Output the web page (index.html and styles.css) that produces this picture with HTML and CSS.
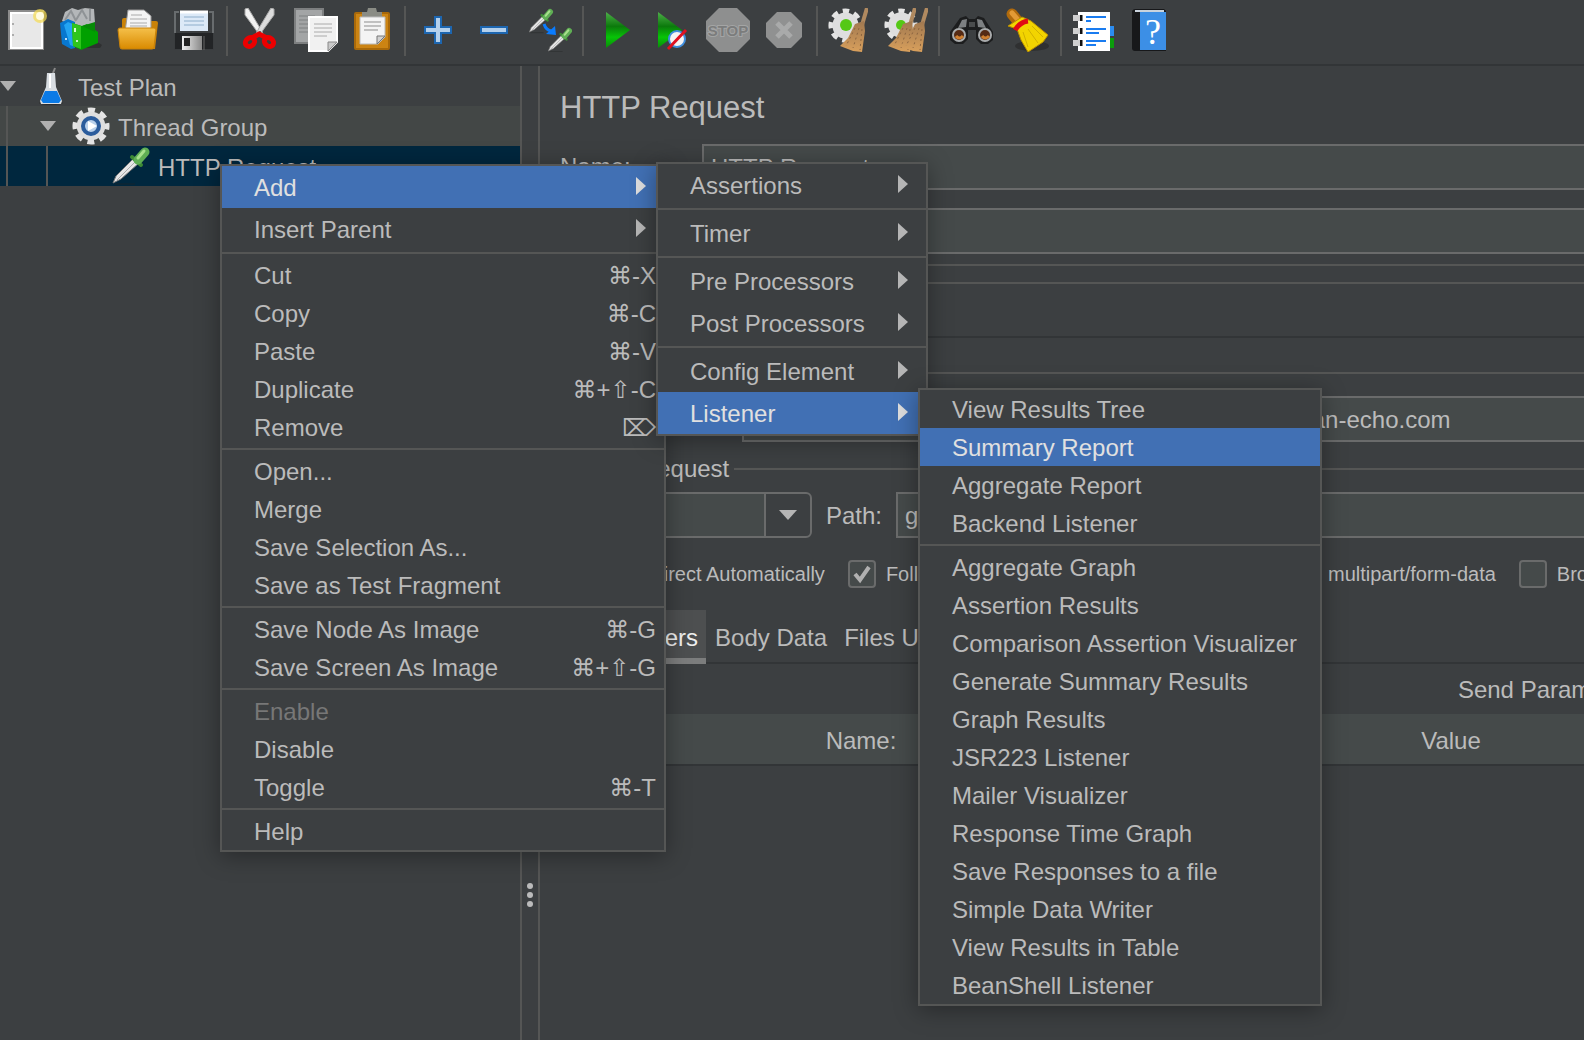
FILE: index.html
```html
<!DOCTYPE html>
<html lang="en">
<head>
    <meta charset="UTF-8">
    <meta name="viewport" content="width=device-width, initial-scale=1.0">
    <title>Apache JMeter</title>
    <link rel="stylesheet" href="styles.css">
</head>

<body>

    <!-- shapes that several icons share -->
    <svg class="shapes" aria-hidden="true">
        <defs>
            <linearGradient id="folder" x1="0" y1="0" x2="0" y2="1"><stop offset="0" stop-color="#f5c04a"/><stop offset="1" stop-color="#d98a00"/></linearGradient>
            <linearGradient id="playfill" x1="0" y1="0" x2="0" y2="1"><stop offset="0" stop-color="#4fae4a"/><stop offset=".4" stop-color="#0b7a0b"/><stop offset=".7" stop-color="#07c407"/><stop offset="1" stop-color="#0a8a0a"/></linearGradient>
            <linearGradient id="straw" x1="0" y1="0" x2="0" y2="1"><stop offset="0" stop-color="#a07850"/><stop offset="1" stop-color="#d9a05c"/></linearGradient>
            <linearGradient id="metal" x1="0" y1="0" x2="1" y2="0"><stop offset="0" stop-color="#eee"/><stop offset="1" stop-color="#888"/></linearGradient>
            <symbol id="gear" viewBox="0 0 40 40">
                <circle cx="20" cy="20" r="16" fill="none" stroke="#e4e4e4" stroke-width="7" stroke-dasharray="7 5.566" stroke-dashoffset="3.5"/>
                <circle cx="20" cy="20" r="15" fill="#dedede"/>
            </symbol>
            <symbol id="dropper" viewBox="0 0 40 40">
                <path d="M4 38h20" stroke="#222" stroke-width="1" opacity=".6"/>
                <path d="M2 37l3-7L23 12l5 5L10 33z" fill="#e6e6e6" stroke="#777" stroke-width="1"/>
                <path d="M6 34L24 16" stroke="#aaa" stroke-width="1"/>
                <path d="M21 11l9 8" stroke="#3d8a35" stroke-width="4" stroke-linecap="round"/>
                <path d="M27 14l7-8" stroke="#5fae54" stroke-width="9" stroke-linecap="round"/>
                <path d="M27 12l6-7" stroke="#a8e08d" stroke-width="3" stroke-linecap="round"/>
            </symbol>
            <symbol id="broom" viewBox="0 0 28 44">
                <path d="M27 0l-5 17" stroke="#b08a60" stroke-width="4"/>
                <path d="M15 16l9-3 1 10-3 21-9-1-13-5 8-8z" fill="url(#straw)"/>
                <path d="M15 20L6 38M19 20l-6 20M22 21l-2 21" stroke="#8a6440" stroke-width="1" stroke-dasharray="2 3"/>
            </symbol>
        </defs>
    </svg>

    <header class="toolbar">
        <button aria-label="New"><svg viewBox="0 0 44 44">
            <rect x="5" y="3" width="34" height="38" fill="#e8e8e8" stroke="#8c8c8c" stroke-width="2"/>
            <path d="M7 40V5h31v35z" fill="none" stroke="#fff" stroke-width="2"/>
            <circle cx="9" cy="16" r="1" fill="#999"/><circle cx="9" cy="27" r="1" fill="#999"/>
            <circle cx="36" cy="8" r="7" fill="#f5dc50" opacity=".7"/><circle cx="36" cy="8" r="4" fill="#fffbe0"/>
        </svg></button>
        <button aria-label="Templates"><svg viewBox="0 0 44 44">
            <path d="M18 40h22l2-3-6-4z" fill="#222" opacity=".5"/>
            <path d="M2 13L5 4l7-4 6 2 7-2 9 1 1 14-16 6z" fill="#b4b7b9"/>
            <path d="M5 12l6-9 5 10M16 12l6-10 5 9M30 1v12" fill="none" stroke="#8f9396" stroke-width="2"/>
            <path d="M0 15l8-4 7 3v26l-4 1-9-5z" fill="#0877cf"/>
            <path d="M4 17l4-3 7 3v22l-5-2z" fill="#23a4f2"/>
            <path d="M12 15l10 3 5-2 11 8v11L21 42l-8-4z" fill="#00a000"/>
            <path d="M12 15l9 3v23l-8-3z" fill="#2fc51c"/>
            <path d="M22 18l13-4v10z" fill="#078a07"/>
            <path d="M15 20v4" stroke="#d8ffd0" stroke-width="2"/><circle cx="17" cy="33" r="1" fill="#fff"/><circle cx="6" cy="31" r="1" fill="#fff"/>
        </svg></button>
        <button aria-label="Open"><svg viewBox="0 0 44 44">
            <path d="M6 12q0-2 2-2h9l4 3h19q2 0 2 2l-3 26H6z" fill="#c98208"/>
            <path d="M12 2h16l7 6v16H9z" fill="#f4f4f4" stroke="#999"/>
            <path d="M15 7h11M14 11h17M14 15h17M14 18h17" stroke="#aaa" stroke-width="1"/>
            <path d="M2 22q0-2 2-2h34q2 0 2 2l-2 17q0 2-2 2H6q-2 0-2-2z" fill="url(#folder)" stroke="#c98208"/>
        </svg></button>
        <button aria-label="Save"><svg viewBox="0 0 44 44">
            <rect x="2" y="2" width="40" height="40" rx="2" fill="#3a3d3f"/>
            <path d="M3 25V4h4M41 25V4h-4" fill="none" stroke="#686c6e" stroke-width="2"/>
            <rect x="3" y="25" width="38" height="16" fill="#222426"/>
            <rect x="8" y="4" width="28" height="19" fill="#dce9f7"/><path d="M8 4h28" stroke="#fff" stroke-width="3"/>
            <path d="M12 9h20M12 13h20M12 17h20" stroke="#8eaecb" stroke-width="1"/>
            <rect x="10" y="28" width="20" height="14" fill="url(#metal)"/><rect x="12" y="30" width="6" height="8" fill="#222"/>
            <path d="M32 28v14" stroke="#666"/>
        </svg></button>
        <span class="divider"></span>
        <button aria-label="Cut"><svg viewBox="0 0 44 44">
            <path d="M7 1l3-1 12 20 3 6-3 3-4-7L7 7z" fill="#f2f2f2" stroke="#aaa"/>
            <path d="M36 1l-3-1-12 20-3 6 3 3 4-7L36 7z" fill="#dcdcdc" stroke="#aaa"/>
            <circle cx="22" cy="24" r="1" fill="#444"/>
            <ellipse cx="12" cy="34" rx="5" ry="4" transform="rotate(-40 12 34)" fill="none" stroke="#ec0000" stroke-width="5"/>
            <ellipse cx="31" cy="34" rx="5" ry="4" transform="rotate(40 31 34)" fill="none" stroke="#ec0000" stroke-width="5"/>
            <path d="M14 30l7-4 8 4" fill="none" stroke="#ec0000" stroke-width="5"/>
        </svg></button>
        <button aria-label="Copy"><svg viewBox="0 0 44 44">
            <rect x="1" y="1" width="28" height="34" fill="#a3a5a6" stroke="#7d7f80" stroke-width="2"/>
            <path d="M5 8h16M5 12h16M5 16h9M5 20h9M5 24h9" stroke="#7f8182" stroke-width="1"/>
            <path d="M15 9h28v25l-9 9H15z" fill="#f1f1f1" stroke="#fff" stroke-width="2"/>
            <path d="M20 16h18M20 20h18M20 24h18M20 28h13" stroke="#aaa" stroke-width="1"/>
            <path d="M34 43v-9h9z" fill="#c9c9c9" stroke="#888"/>
        </svg></button>
        <button aria-label="Paste"><svg viewBox="0 0 44 44">
            <rect x="5" y="5" width="34" height="36" rx="1" fill="#cc8413" stroke="#a9690a" stroke-width="2"/>
            <path d="M12 8V4h5l1-4h8l1 4h5v6H12z" fill="#8a8c85"/>
            <path d="M10 9h25v20l-7 7H10z" fill="#f4f4f4" stroke="#bbb"/>
            <path d="M14 14h17M14 18h17M14 22h14" stroke="#8d8d8d" stroke-width="1"/>
            <path d="M27 36v-8h8z" fill="#d2d2d2" stroke="#777"/>
        </svg></button>
        <span class="divider"></span>
        <button aria-label="Expand All"><svg viewBox="0 0 44 44">
            <path d="M19 9h6v10h10v6H25v10h-6V25H9v-6h10z" fill="#b4d0ec" stroke="#1d66b0" stroke-width="2"/>
        </svg></button>
        <button aria-label="Collapse All"><svg viewBox="0 0 44 44">
            <rect x="9" y="19" width="26" height="6" fill="#b4d0ec" stroke="#1d66b0" stroke-width="2"/>
        </svg></button>
        <button aria-label="Toggle"><svg viewBox="0 0 44 44">
            <use href="#dropper" x="0" y="0" width="26" height="26"/>
            <use href="#dropper" x="19" y="19" width="26" height="26"/>
            <path d="M16 16q2 6 7 7" fill="none" stroke="#0a7cff" stroke-width="3"/><path d="M27 18l1 9-10-1z" fill="#0a7cff"/>
        </svg></button>
        <span class="divider"></span>
        <button aria-label="Start"><svg viewBox="0 0 44 44">
            <path d="M12 4l24 18L12 40z" fill="url(#playfill)"/>
        </svg></button>
        <button aria-label="Start no pauses"><svg viewBox="0 0 44 44">
            <path d="M8 4l24 18L8 40z" fill="url(#playfill)"/>
            <circle cx="27" cy="31" r="8" fill="#f4f4f4" stroke="#3f8ede" stroke-width="2"/>
            <path d="M18 41l18-19" stroke="#e01020" stroke-width="3"/>
        </svg></button>
        <button aria-label="Stop" disabled><svg viewBox="0 0 44 44">
            <path d="M13 0h18l13 13v18L31 44H13L0 31V13z" fill="#8e8f8f"/>
            <text class="stop-text" x="22" y="28" text-anchor="middle">STOP</text>
        </svg></button>
        <button aria-label="Shutdown" disabled><svg viewBox="0 0 44 44">
            <path d="M15 4h14l11 11v14L29 40H15L4 29V15z" fill="#909191"/>
            <path d="M15 15l14 14M29 15L15 29" stroke="#a9aaaa" stroke-width="5"/>
        </svg></button>
        <span class="divider"></span>
        <button aria-label="Clear"><svg viewBox="0 0 44 44">
            <use href="#gear" x="0" y="0" width="35" height="35"/>
            <circle cx="18" cy="17" r="6" fill="#55c815"/>
            <use href="#broom" x="12" y="0" width="28" height="44"/>
        </svg></button>
        <button aria-label="Clear All"><svg viewBox="0 0 44 44">
            <use href="#gear" x="0" y="0" width="34" height="34"/>
            <circle cx="17" cy="17" r="5" fill="#55c815"/>
            <use href="#broom" x="4" y="0" width="28" height="44"/>
            <use href="#broom" x="16" y="0" width="28" height="44"/>
        </svg></button>
        <span class="divider"></span>
        <button aria-label="Search"><svg viewBox="0 0 44 44">
            <path d="M10 10l6-2 3 3h6l3-3 6 2 9 14v8l-5 4h-7l-5-5v-9h-8v9l-5 5H5l-5-4v-8z" fill="#1c1d1e"/>
            <path d="M12 12l5-1-1 8-8 1zM32 12l-5-1 1 8 8 1z" fill="#7d8082"/>
            <path d="M19 14h6v5h-6z" fill="#4a4c4d"/>
            <circle cx="9" cy="27" r="6" fill="#552a14" stroke="#a9abac" stroke-width="2"/>
            <circle cx="35" cy="27" r="6" fill="#552a14" stroke="#a9abac" stroke-width="2"/>
            <path d="M6 28q3 4 7 0M32 28q3 4 7 0" fill="none" stroke="#d08030" stroke-width="3"/>
        </svg></button>
        <button aria-label="Reset Search"><svg viewBox="0 0 44 44">
            <ellipse cx="26" cy="38" rx="17" ry="5" fill="#222" opacity=".5"/>
            <path d="M6 6l8 10" stroke="#b06a0c" stroke-width="11" stroke-linecap="round"/>
            <path d="M6 5l7 8" stroke="#e29a35" stroke-width="5" stroke-linecap="round"/>
            <path d="M2 18l14-9 9 4 17 14-5 7-15 10-7-12-4-11z" fill="#f2d400" stroke="#b98e00"/>
            <path d="M17 24l5 15M22 21l10 14M26 18l11 11" stroke="#d1b100"/>
            <path d="M9 22q5-8 13-9" fill="none" stroke="#e10a14" stroke-width="5"/>
        </svg></button>
        <span class="divider"></span>
        <button aria-label="Function Helper"><svg viewBox="0 0 44 44">
            <rect x="36" y="18" width="6" height="10" fill="#2b8cf0"/><rect x="36" y="30" width="6" height="10" fill="#0b9c0b"/>
            <rect x="6" y="4" width="32" height="39" fill="#fff"/>
            <path d="M9 7v6M9 20v6M9 32v6" stroke="#111" stroke-width="3"/>
            <path d="M1 10h7M1 23h7M1 35h7" stroke="#cfcfcf" stroke-width="6"/>
            <path d="M14 9h20M14 13h5M14 21h20M14 25h13M14 33h20M14 37h10" stroke="#1a7cf0" stroke-width="2"/>
        </svg></button>
        <button aria-label="Help"><svg viewBox="0 0 44 44">
            <path d="M4 4q0-3 4-3h28l2 2v40H7q-3 0-3-3z" fill="#17181a"/>
            <path d="M7 3h29" stroke="#c9d3dd" stroke-width="2"/>
            <rect x="12" y="4" width="26" height="38" fill="#3c8fe6"/>
            <text class="help-text" x="25" y="36" text-anchor="middle">?</text>
        </svg></button>
    </header>

    <div class="workspace">
        <nav class="tree" aria-label="Test plan tree">
            <ul>
                <li class="node">
                    <span class="toggle"></span>
                    <svg viewBox="0 0 40 40">
                        <ellipse cx="19" cy="37" rx="12" ry="2" fill="#222" opacity=".6"/>
                        <path d="M21 7l2-5" stroke="#888" stroke-width="2"/>
                        <path d="M15 7h8l1 14 6 14-1 3H9l-1-3 6-14z" fill="#d8dde2"/>
                        <path d="M13 25h12l4 9-2 3H11l-2-3z" fill="#0a7ae6"/>
                        <path d="M18 8v14" stroke="#fff" stroke-width="2"/>
                    </svg>
                    <span class="name">Test Plan</span>
                </li>
                <li class="node hover">
                    <span class="guide"></span>
                    <span class="toggle"></span>
                    <svg viewBox="0 0 40 40">
                        <use href="#gear" x="0" y="1" width="38" height="38"/>
                        <circle cx="19" cy="20" r="8" fill="#b9d0ea" stroke="#2b5c9c" stroke-width="4"/>
                        <path d="M16 15l9 5-9 5z" fill="#fff"/>
                    </svg>
                    <span class="name">Thread Group</span>
                </li>
                <li class="node selected">
                    <span class="guide"></span>
                    <span class="guide"></span>
                    <span class="toggle leaf"></span>
                    <svg viewBox="0 0 40 40"><use href="#dropper" x="-1" y="0" width="40" height="40"/></svg>
                    <span class="name">HTTP Request</span>
                </li>
            </ul>
        </nav>

        <div class="splitter"><svg viewBox="0 0 6 24"><circle cx="3" cy="3" r="3"/><circle cx="3" cy="12" r="3"/><circle cx="3" cy="21" r="3"/></svg></div>

        <main class="sampler">
            <h1>HTTP Request</h1>
            <div class="row">
                <label for="name">Name:</label>
                <input class="grow" id="name" type="text" value="HTTP Request">
            </div>
            <div class="row">
                <label for="comments">Comments:</label>
                <input class="grow" id="comments" type="text">
            </div>

            <div class="settings">
                <div class="tabs main-tabs">
                    <button class="tab active">Basic</button>
                    <button class="tab">Advanced</button>
                </div>

                <fieldset>
                    <legend>Web Server</legend>
                    <div class="line">
                        <label class="protocol" for="protocol">Protocol [http]:</label>
                        <input class="protocol-field" id="protocol" type="text">
                        <label for="server">Server Name or IP:</label>
                        <input class="grow" id="server" type="text" value="postman-echo.com">
                    </div>
                </fieldset>

                <fieldset>
                    <legend>HTTP Request</legend>
                    <div class="line">
                        <select aria-label="Method"><option>GET</option></select>
                        <label for="path">Path:</label>
                        <input class="grow" id="path" type="text" value="get">
                    </div>
                    <div class="checks">
                        <label><input type="checkbox">Redirect Automatically</label>
                        <label><input type="checkbox" checked>Follow Redirects</label>
                        <label><input type="checkbox" checked>Use KeepAlive</label>
                        <label><input type="checkbox">Use multipart/form-data</label>
                        <label><input type="checkbox">Browser-compatible headers</label>
                    </div>
                    <div class="tabs">
                        <button class="tab active">Parameters</button>
                        <button class="tab">Body Data</button>
                        <button class="tab">Files Upload</button>
                    </div>
                    <table>
                        <caption>Send Parameters With the Request:</caption>
                        <thead>
                            <tr><th class="wide">Name:</th><th class="wide">Value</th><th>URL Encode?</th></tr>
                        </thead>
                    </table>
                </fieldset>
            </div>
        </main>
    </div>

    <ul class="menu context" role="menu">
        <li>
            <button class="parent selected">Add</button>
            <ul class="menu elements" role="menu">
                <li><button class="parent">Assertions</button></li>
                <li class="separator"></li>
                <li><button class="parent">Timer</button></li>
                <li class="separator"></li>
                <li><button class="parent">Pre Processors</button></li>
                <li><button class="parent">Post Processors</button></li>
                <li class="separator"></li>
                <li><button class="parent">Config Element</button></li>
                <li>
                    <button class="parent selected">Listener</button>
                    <ul class="menu listeners" role="menu">
                        <li><button>View Results Tree</button></li>
                        <li><button class="selected">Summary Report</button></li>
                        <li><button>Aggregate Report</button></li>
                        <li><button>Backend Listener</button></li>
                        <li class="separator"></li>
                        <li><button>Aggregate Graph</button></li>
                        <li><button>Assertion Results</button></li>
                        <li><button>Comparison Assertion Visualizer</button></li>
                        <li><button>Generate Summary Results</button></li>
                        <li><button>Graph Results</button></li>
                        <li><button>JSR223 Listener</button></li>
                        <li><button>Mailer Visualizer</button></li>
                        <li><button>Response Time Graph</button></li>
                        <li><button>Save Responses to a file</button></li>
                        <li><button>Simple Data Writer</button></li>
                        <li><button>View Results in Table</button></li>
                        <li><button>BeanShell Listener</button></li>
                    </ul>
                </li>
            </ul>
        </li>
        <li><button class="parent">Insert Parent</button></li>
        <li class="separator"></li>
        <li><button>Cut <kbd>⌘-X</kbd></button></li>
        <li><button>Copy <kbd>⌘-C</kbd></button></li>
        <li><button>Paste <kbd>⌘-V</kbd></button></li>
        <li><button>Duplicate <kbd>⌘+⇧-C</kbd></button></li>
        <li><button>Remove <kbd>⌦</kbd></button></li>
        <li class="separator"></li>
        <li><button>Open...</button></li>
        <li><button>Merge</button></li>
        <li><button>Save Selection As...</button></li>
        <li><button>Save as Test Fragment</button></li>
        <li class="separator"></li>
        <li><button>Save Node As Image <kbd>⌘-G</kbd></button></li>
        <li><button>Save Screen As Image <kbd>⌘+⇧-G</kbd></button></li>
        <li class="separator"></li>
        <li><button disabled>Enable</button></li>
        <li><button>Disable</button></li>
        <li><button>Toggle <kbd>⌘-T</kbd></button></li>
        <li class="separator"></li>
        <li><button>Help</button></li>
    </ul>

</body>
</html>
```

FILE: styles.css
```css
:root {
    --back: #3c3f41;
    --field: #454a4a;
    --text: #bbbbbb;
    --line: #555655;
    --dark: #323537;
    --edge: #6a6b6b;
    --blue: #4170b4;
}

* { box-sizing: border-box; }

body {
    margin: 0;
    height: 100vh;
    display: flex;
    flex-direction: column;
    position: relative;
    overflow: hidden;
    background: var(--back);
    color: var(--text);
    font: 24px/28px "Liberation Sans", "DejaVu Sans", sans-serif;
}

ul { list-style: none; margin: 0; padding: 0; }
button, input, select { font: inherit; color: inherit; }
button { border: 0; background: none; }
.shapes { position: absolute; width: 0; height: 0; }

/* toolbar */
.toolbar {
    display: flex;
    align-items: flex-start;
    margin-left: -2px;
    padding: 6px 0 8px;
    border-bottom: 2px solid var(--dark);
}
.toolbar button { padding: 2px 6px; }
.toolbar svg { display: block; width: 44px; height: 44px; }
.divider { width: 2px; height: 50px; margin: 0 4px; background: var(--line); }
.stop-text { font: bold 15px "Liberation Sans", sans-serif; fill: #7b7c7c; stroke: #a4a5a5; stroke-width: 2px; paint-order: stroke; }
.help-text { font: 36px "Liberation Serif", serif; fill: #fff; }

.workspace { flex: 1; display: flex; min-height: 0; }

/* tree */
.tree { flex: 0 0 522px; border-right: 2px solid var(--line); }
.node { display: flex; align-items: center; height: 40px; white-space: nowrap; }
.node svg { width: 40px; height: 40px; margin-right: 6px; }
.node.hover { background: #434746; }
.node.selected { background: #00273e; }
.name { padding-top: 4px; }
.guide { width: 34px; height: 40px; margin-left: 6px; border-left: 2px solid var(--line); }
.toggle { width: 32px; height: 10px; }
.toggle::before { content: ""; display: block; width: 16px; height: 10px; background: #b0b0b0; clip-path: polygon(0 0, 100% 0, 50% 100%); }
.toggle.leaf::before { display: none; }

.splitter { flex: 0 0 16px; display: flex; align-items: flex-end; justify-content: center; padding-bottom: 133px; }
.splitter svg { width: 6px; height: 24px; fill: #bbb; }

/* sampler form */
.sampler { flex: 1; min-width: 0; overflow: hidden; border-left: 2px solid var(--line); padding: 22px 0 0 20px; }
h1 { margin: 0 0 16px; font-size: 31px; line-height: 40px; font-weight: normal; }
.row { display: flex; align-items: center; margin-bottom: 18px; }
.row label { width: 142px; }
.grow { flex: 1; min-width: 0; }
input[type=text] { height: 46px; padding: 2px 7px 0; border: 2px solid var(--edge); border-right: 0; background: var(--field); }
input.protocol-field { border-right: 2px solid var(--edge); width: 262px; }

.settings { margin-top: -8px; padding-top: 16px; border-top: 2px solid var(--line); }
.main-tabs { border-top: 2px solid var(--line); }
fieldset { min-width: 0; margin: 21px 0 0; padding: 9px 0 0 6px; border: 0; border-top: 2px solid var(--line); }
fieldset + fieldset { margin-top: 13px; }
legend { padding: 0 5px; }
.line { display: flex; align-items: center; gap: 14px; padding-left: 6px; }
.line label { padding-top: 2px; }
.protocol { width: 156px; }

select {
    appearance: none;
    width: 240px;
    height: 46px;
    padding: 0 10px;
    border: 2px solid var(--edge);
    border-radius: 6px;
    background:
        url("data:image/svg+xml,%3Csvg xmlns='http://www.w3.org/2000/svg' width='18' height='10'%3E%3Cpath d='M0 0h18l-9 10z' fill='%23b5b5b5'/%3E%3C/svg%3E") no-repeat right 13px center,
        linear-gradient(to right, var(--edge) 2px, var(--back) 2px) no-repeat right / 46px 100%,
        var(--field);
}

.checks { display: flex; gap: 23px; margin: 22px 0; padding-left: 23px; white-space: nowrap; font-size: 20px; }
.checks label { flex: none; display: flex; align-items: center; gap: 10px; }
.checks input { appearance: none; width: 28px; height: 28px; margin: 0; border: 2px solid var(--edge); border-radius: 4px; background: var(--field); }
.checks input:checked {
    background: var(--field) url("data:image/svg+xml,%3Csvg xmlns='http://www.w3.org/2000/svg' width='24' height='24'%3E%3Cpath d='M5 12l5 6L19 5' fill='none' stroke='%23b0b0b0' stroke-width='4'/%3E%3C/svg%3E") center;
}

.tabs { display: flex; gap: 1px; height: 54px; border-bottom: 2px solid var(--dark); }
.tab { height: 54px; padding: 8px 8px 0; border-bottom: 6px solid transparent; white-space: nowrap; }
.tab.active { background: #4d4f50; border-color: #7c7d7d; color: #eee; }
.main-tabs, .main-tabs .tab { height: 56px; }

/* wider than the window, the rest is cut off */
table { width: 2158px; table-layout: fixed; border-spacing: 0; }
caption { padding: 2px 0 0 10px; line-height: 48px; }
th { height: 52px; padding: 4px 0 0; border-bottom: 2px solid var(--dark); background: var(--field); font-weight: normal; }
th.wide { width: 590px; }

/* menus */
.menu { position: absolute; z-index: 1; border: 2px solid var(--line); background: var(--back); box-shadow: 0 4px 22px rgba(0, 0, 0, .35); }
.menu li { position: relative; }
.menu button { display: flex; justify-content: space-between; align-items: center; width: 100%; height: 38px; padding: 2px 8px 0 32px; white-space: nowrap; }
.menu button.parent { height: 42px; padding-right: 18px; }
.menu button.parent::after { content: ""; width: 10px; height: 18px; margin-bottom: 4px; background: #b5b5b5; clip-path: polygon(0 0, 100% 50%, 0 100%); }
.menu button.selected { background: var(--blue); color: #e0e0e0; }
.menu button.selected::after { background: #ddd; }
.menu button:disabled { color: #777; }
.menu .separator { height: 2px; margin: 2px 0; background: var(--line); }
kbd { font: inherit; }
.context { left: 220px; top: 164px; width: 446px; }
.menu .menu { left: calc(100% - 8px); top: -4px; }
.elements { width: 272px; }
.listeners { width: 404px; }
```
